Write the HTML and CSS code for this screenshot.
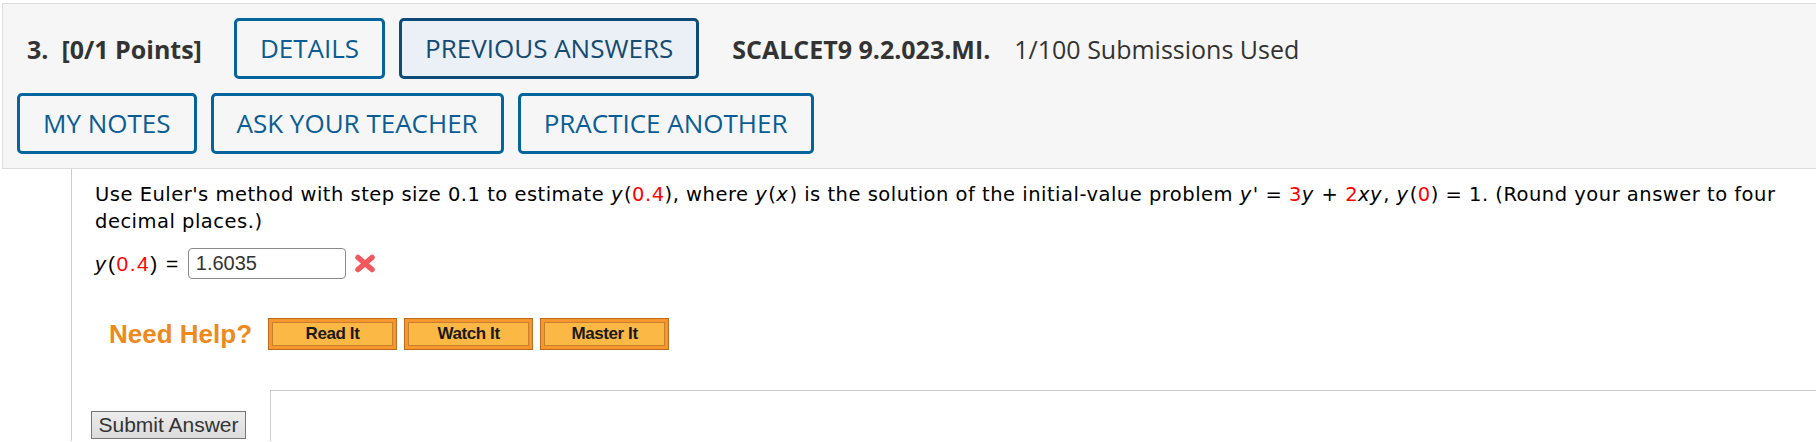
FILE: index.html
```html
<!DOCTYPE html>
<html>
<head>
    <title>Pregunta 3 - SCALCET9 9.2.023.MI.</title>
    <meta charset="UTF-8">
    <link rel="stylesheet" href="styles.css">
</head>
<body>
    <div class="question-header">
        <div class="header-row">
            <span class="points">3.&nbsp; [0/1 Points]</span>
            <a href="#" class="hdr-btn">DETAILS</a>
            <a href="#" class="hdr-btn active">PREVIOUS ANSWERS</a>
            <span class="question-id">SCALCET9 9.2.023.MI.</span>
            <span class="submissions">1/100 Submissions Used</span>
        </div>
        <div class="header-row">
            <a href="#" class="hdr-btn">MY NOTES</a>
            <a href="#" class="hdr-btn">ASK YOUR TEACHER</a>
            <a href="#" class="hdr-btn">PRACTICE ANOTHER</a>
        </div>
    </div>

    <div class="question-body">
        <p class="prompt">Use Euler's method with step size 0.1 to estimate <i>y</i>(<span class="red">0.4</span>), where <i>y</i>(<i>x</i>) is the solution of the initial-value problem <i>y</i>' = <span class="red">3</span><i>y</i> + <span class="red">2</span><i>xy</i>, <i>y</i>(<span class="red">0</span>) = 1. (Round your answer to four decimal places.)</p>

        <div class="answer-row">
            <span class="answer-label"><i>y</i>(<span class="red">0.4</span>) =</span>
            <input type="text" class="answer-input" value="1.6035">
            <svg class="wrong-mark" width="22" height="19" viewBox="0 0 22 19">
                <path d="M4 3.5 L18 15.5 M18 3.5 L4 15.5" stroke="#f0585e" stroke-width="5.5" stroke-linecap="round"/>
            </svg>
        </div>

        <div class="help-row">
            <span class="need-help">Need Help?</span>
            <a href="#" class="help-btn"><span>Read It</span></a>
            <a href="#" class="help-btn"><span>Watch It</span></a>
            <a href="#" class="help-btn"><span>Master It</span></a>
        </div>

        <div class="submit-row">
            <button class="submit-btn">Submit Answer</button>
            <div class="feedback-box"></div>
        </div>
    </div>
</body>
</html>
```

FILE: styles.css
```css
body {
    margin: 0;
    overflow: hidden;
    background-color: white;
    font-family: "Open Sans", Arial, sans-serif;
}
.question-header {
    margin: 3px -20px 0 2px;
    padding: 14px;
    background-color: #f6f6f6;
    border: 1px solid #dddddd;
}
.header-row {
    display: flex;
    align-items: center;
    gap: 14px;
}
.header-row + .header-row {
    margin-top: 14px;
}
.points {
    margin: 0 18px 0 10px;
    font-size: 25px;
    font-weight: bold;
    color: #333333;
}
.hdr-btn {
    display: inline-block;
    height: 55px;
    line-height: 55px;
    padding: 0 23px;
    border: 3px solid #04649c;
    border-radius: 5px;
    font-size: 26px;
    color: #0a5d94;
    text-decoration: none;
}
.hdr-btn.active {
    background-color: #eaf0f5;
    border-color: #0d4c79;
    color: #154a72;
}
.question-id {
    margin-left: 19px;
    font-size: 25px;
    font-weight: bold;
    color: #333333;
}
.submissions {
    margin-left: 10px;
    font-size: 25px;
    color: #333333;
}
.question-body {
    height: 272px;
    margin-left: 71px;
    padding: 12px 0 0 23px;
    border-left: 1px solid #cccccc;
    box-sizing: border-box;
}
.prompt {
    margin: 0;
    padding-right: 20px;
    font-family: "DejaVu Sans", Verdana, sans-serif;
    font-size: 19.5px;
    letter-spacing: 0.5px;
    line-height: 27px;
    color: #000000;
}
.prompt i,
.answer-label i {
    padding-right: 1px;
}
.red {
    color: #ff0000;
    font-style: normal;
}
.answer-row {
    display: flex;
    align-items: center;
    margin-top: 13px;
    font-family: "Liberation Sans", Arial, sans-serif;
    font-size: 21px;
}
.answer-label {
    letter-spacing: 1.5px;
}
.answer-input {
    width: 158px;
    height: 31px;
    box-sizing: border-box;
    margin-left: 8px;
    padding: 0 0 0 7px;
    border: 1px solid #8a8a8a;
    border-radius: 4px;
    font-family: "Liberation Sans", Arial, sans-serif;
    font-size: 20px;
    color: #333333;
}
.wrong-mark {
    margin-left: 8px;
}
.help-row {
    display: flex;
    align-items: center;
    gap: 7px;
    margin-top: 39px;
    padding-left: 14px;
}
.need-help {
    margin-right: 9px;
    font-family: "Liberation Sans", Arial, sans-serif;
    font-size: 26px;
    font-weight: bold;
    color: #ee8a1c;
}
.help-btn {
    display: block;
    width: 129px;
    box-sizing: border-box;
    padding: 3px;
    background-color: #f6962c;
    border: 1px solid #b96b1f;
    text-decoration: none;
}
.help-btn span {
    display: block;
    height: 22px;
    line-height: 22px;
    background-color: #fcb844;
    border: 1px solid #c8802e;
    text-align: center;
    font-family: "Liberation Sans", Arial, sans-serif;
    font-size: 17px;
    font-weight: bold;
    letter-spacing: -0.4px;
    color: #1a1a1a;
}
.submit-row {
    display: flex;
    align-items: flex-start;
    margin: 40px 0 0 -4px;
}
.submit-btn {
    margin-top: 21px;
    width: 155px;
    height: 28px;
    padding: 0;
    background: linear-gradient(#ececec, #dcdcdc);
    border: 1px solid #767676;
    font-family: "Liberation Sans", Arial, sans-serif;
    font-size: 21px;
    color: #333333;
}
.feedback-box {
    flex: 1;
    height: 51px;
    margin-left: 24px;
    border-top: 1px solid #cccccc;
    border-left: 1px solid #cccccc;
}
```
